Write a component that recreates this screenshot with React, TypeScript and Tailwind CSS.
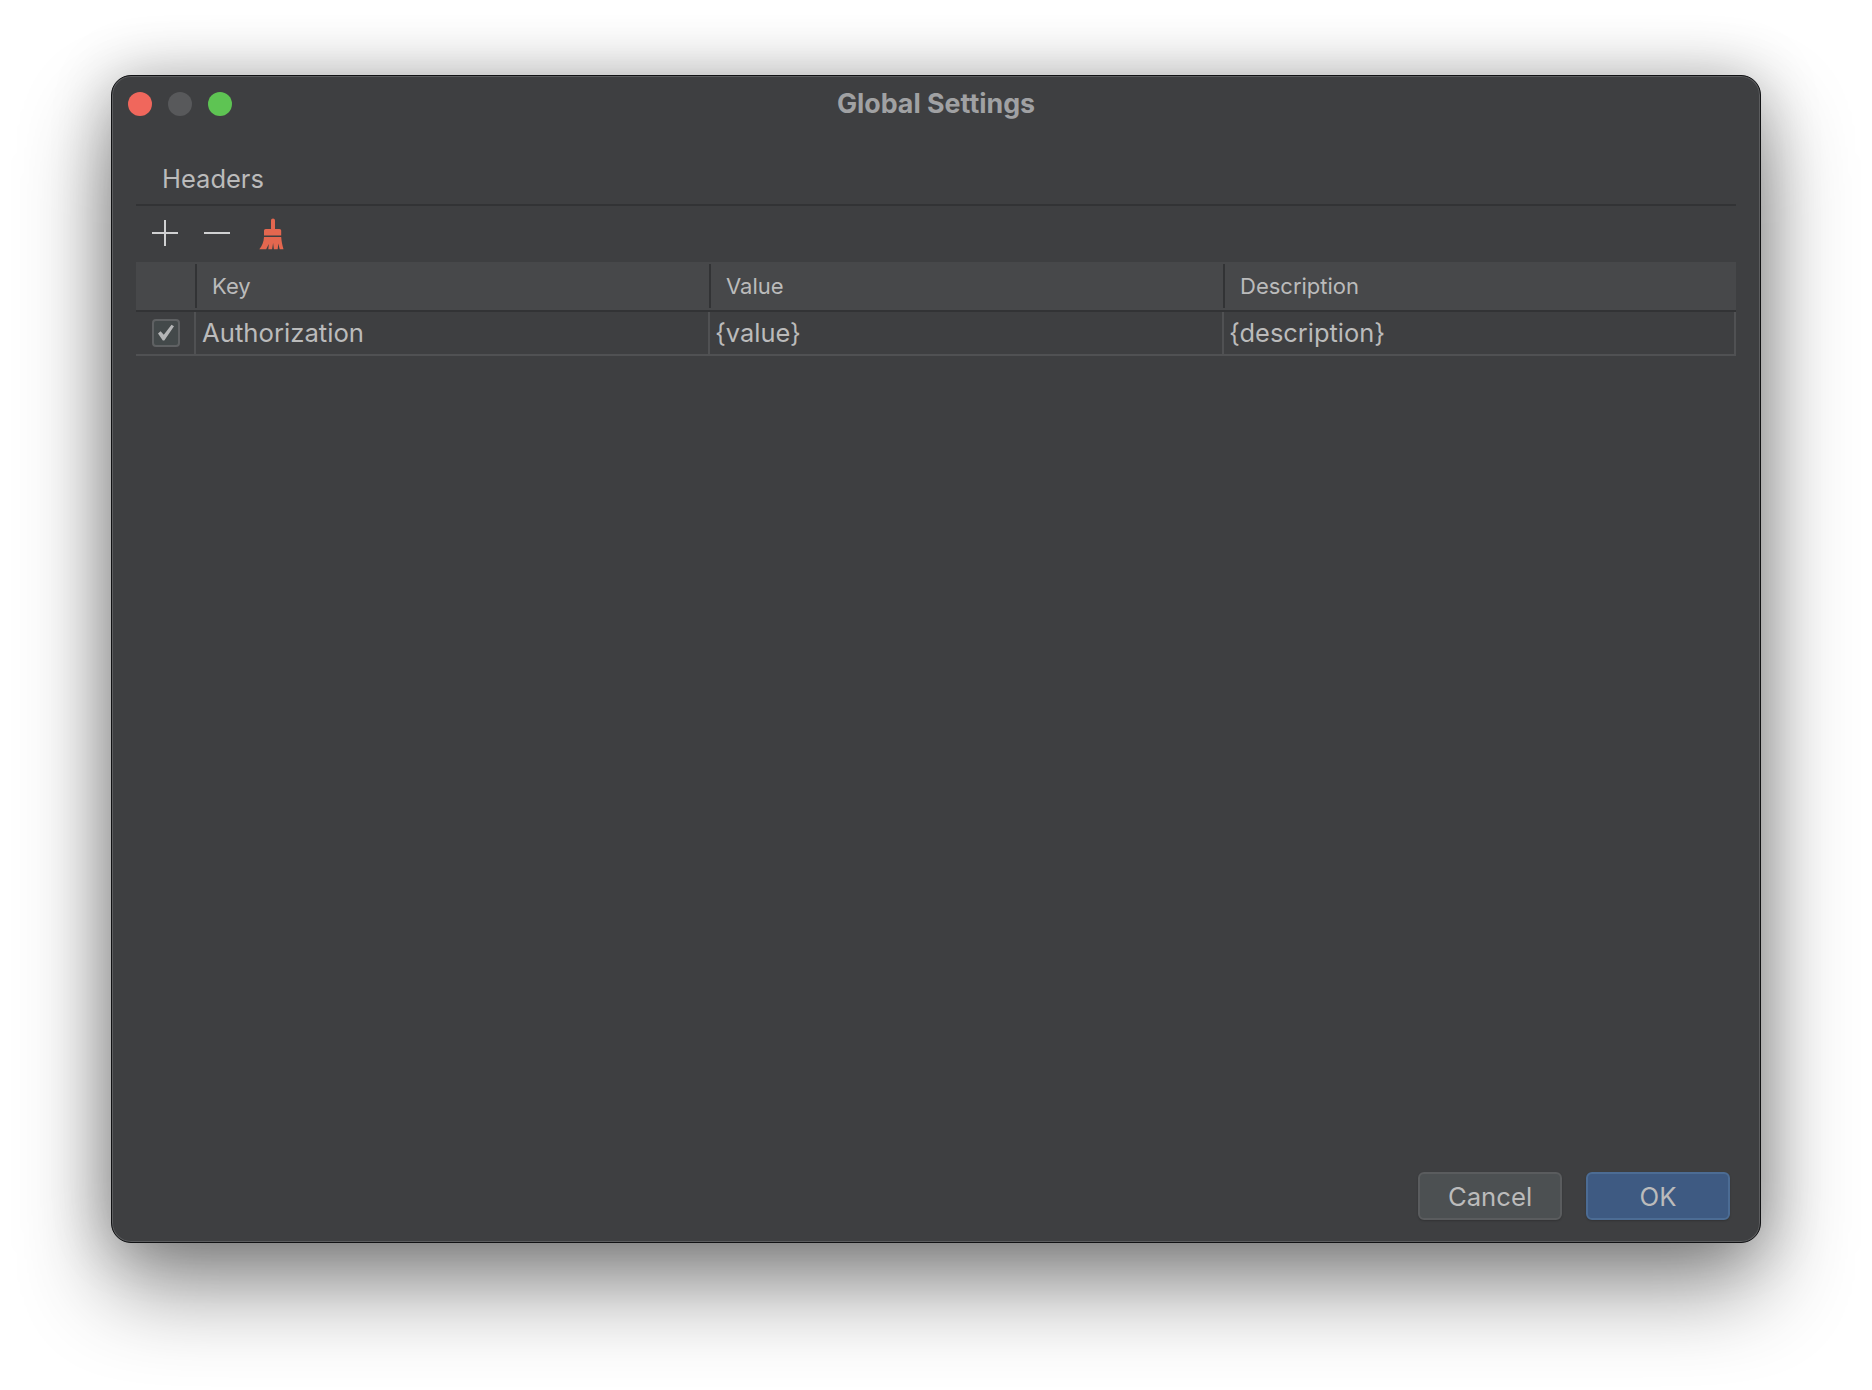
import React from "react";

const font = "font-['Inter','Liberation_Sans',sans-serif]";

const BroomIcon = () => (
  <svg width="26" height="32" viewBox="0 0 26 32" fill="#e4674f">
    <path d="M12 2.500C12 1.400 12.900.5 14 .5s2 .9 2 2V11h4.500c1 0 1.700.8 1.700 1.800v4.700H5v-4.700c0-1 .7-1.800 1.700-1.800H12z" />
    <path d="M5 19h17.200c.3 4 1 8 2.300 12.200h-3.800l-1.400-5.700-.6 5.700h-3.800l-.8-6.200-1 6.200H9.300l.5-5.200-2.600 5.200H.3C3 28 4.800 24 5 19z" />
  </svg>
);

const App = () => {
  return (
    <div className={`min-h-screen bg-white pt-[75px] pl-[111px] ${font}`}>
      <div className="flex h-[1168px] w-[1650px] flex-col rounded-[20px] border border-[#111214] bg-[#3e3f41] shadow-[0_44px_90px_rgba(0,0,0,0.45),0_0_60px_rgba(0,0,0,0.24)] ring-1 ring-inset ring-[#5c5d5f]">
        {/* title bar */}
        <div className="relative flex h-[54px] shrink-0 items-center justify-center">
          <div className="absolute left-[16px] top-[16px] flex gap-4">
            <span className="h-6 w-6 rounded-full bg-[#f0675c]" />
            <span className="h-6 w-6 rounded-full bg-[#58595b]" />
            <span className="h-6 w-6 rounded-full bg-[#5ec453]" />
          </div>
          <h1 className="text-[26.800px] font-bold leading-none text-[#a0a1a3]">Global Settings</h1>
        </div>

        {/* tab */}
        <div className="mx-[24px] mt-[18px] h-[58px] border-b-2 border-[#323335] pl-[26px] text-[25.500px] leading-[62px] text-[#bbbbbb]">
          Headers
        </div>

        {/* toolbar */}
        <div className="mx-[24px] flex h-[56px] items-center">
          <svg width="26" height="26" viewBox="0 0 26 26" className="mb-[2px] ml-[16px]" stroke="#d0d1d2" strokeWidth="2">
            <path d="M0 13h26M13 0v26" />
          </svg>
          <svg width="26" height="26" viewBox="0 0 26 26" className="mb-[2px] ml-[26px]" stroke="#d0d1d2" strokeWidth="2">
            <path d="M0 13h26" />
          </svg>
          <span className="ml-[29px] flex">
            <BroomIcon />
          </span>
        </div>

        {/* table header */}
        <div className="mx-[24px] flex h-[50px] items-center border-b-2 border-[#323335] bg-[#47484a] text-[22px] text-[#bbbbbb]">
          <div className="h-[44px] w-[61px] shrink-0 border-r-2 border-[#323335]" />
          <div className="flex h-[44px] w-[514px] shrink-0 items-center border-r-2 border-[#323335] pl-[15px]">Key</div>
          <div className="flex h-[44px] w-[514px] shrink-0 items-center border-r-2 border-[#323335] pl-[15px]">Value</div>
          <div className="flex h-[44px] flex-1 items-center pl-[15px]">Description</div>
        </div>

        {/* table row */}
        <div className="mx-[24px] flex h-[44px] items-stretch border-b-2 border-r-2 border-[#505153] text-[25.400px] text-[#bbbbbb]">
          <div className="flex w-[60px] shrink-0 items-center border-r-2 border-[#505153] pl-[16px]">
            <span className="flex h-[28px] w-[28px] items-center justify-center rounded-[4px] border-2 border-[#5f6163] bg-[#43494a]">
              <svg width="18" height="18" viewBox="0 0 18 18" fill="#b4b5b6">
                <path d="M1 9.500l2.600-2.300 3.200 3.600L14.500.8 17 2.300 7.300 16.500h-1.500z" />
              </svg>
            </span>
          </div>
          <div className="flex w-[514px] shrink-0 items-center border-r-2 border-[#505153] pl-[6px] text-[25.700px]">Authorization</div>
          <div className="flex w-[514px] shrink-0 items-center border-r-2 border-[#505153] pl-[5px]">{"{value}"}</div>
          <div className="flex flex-1 items-center pl-[5px]">{"{description}"}</div>
        </div>

        <div className="flex-1" />

        {/* footer */}
        <div className="flex justify-end gap-6 pb-[22px] pr-[30px] text-[25.700px] text-[#bbbbbb]">
          <button className="h-[48px] w-[144px] rounded-[6px] border-2 border-[#5a5c5e] bg-[#4c5052] pt-[2px] shadow-[0_1px_2px_rgba(0,0,0,0.2)]">
            Cancel
          </button>
          <button className="h-[48px] w-[144px] rounded-[6px] border-2 border-[#4c6c94] bg-[#3e5a82] pt-[2px] shadow-[0_1px_2px_rgba(0,0,0,0.2)]">
            OK
          </button>
        </div>
      </div>
    </div>
  );
};

export default App;
